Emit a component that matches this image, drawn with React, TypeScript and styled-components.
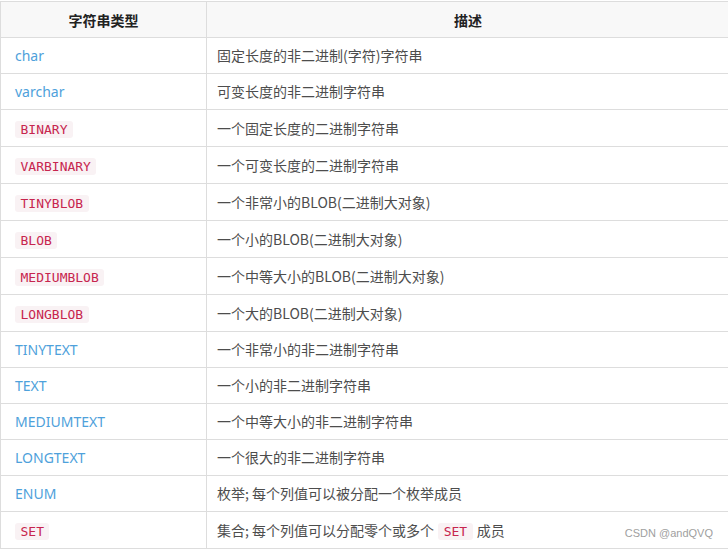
import React from "react";
import styled, { createGlobalStyle } from "styled-components";

const Global = createGlobalStyle`
  html, body { margin: 0; padding: 0; background: #fff; overflow: hidden; }
  body { font-family: "Noto Sans", "Noto Sans CJK SC", sans-serif; }
`;

const Page = styled.div`
  position: relative;
  width: 728px;
  height: 549px;
  overflow: hidden;
  padding-top: 1px;
  box-sizing: border-box;
`;

const Table = styled.table`
  width: 730px;
  border-collapse: collapse;
  table-layout: fixed;
  font-size: 14px;
  color: #4d4d4d;
`;

const HeadCell = styled.th`
  box-sizing: border-box;
  height: 36px;
  padding: 0;
  background: #f8f8f8;
  border: 1px solid #dddddd;
  color: #222;
  font-weight: bold;
  font-size: 14px;
  text-align: center;
  vertical-align: middle;
  font-family: "Noto Sans CJK SC", sans-serif;
`;

const Cell = styled.td<{ $tall?: boolean; $first?: boolean }>`
  box-sizing: border-box;
  height: ${(p) => (p.$tall ? 37 : 36)}px;
  padding: 0 0 0 ${(p) => (p.$first ? 14 : 10)}px;
  border: 1px solid #dddddd;
  vertical-align: middle;
  line-height: 22px;
  white-space: nowrap;
`;

const TypeName = styled.span`
  color: #4ea1db;
  font-family: "Noto Sans", sans-serif;
  font-size: 14px;
`;

const Code = styled.code`
  display: inline-block;
  font-family: "DejaVu Sans Mono", monospace;
  font-size: 13px;
  line-height: 17px;
  padding: 0 5.5px;
  margin: 0 1px;
  color: #c7254e;
  background: #f9f2f4;
  border-radius: 3px;
  vertical-align: middle;
`;

const FirstCode = styled(Code)`
  margin-left: 0;
`;

const Desc = styled.span`
  font-family: "Noto Sans CJK SC", sans-serif;
  font-size: 14px;
  color: #4d4d4d;
`;

const Watermark = styled.div`
  position: absolute;
  right: 15px;
  bottom: 10px;
  font-family: "Liberation Sans", sans-serif;
  font-size: 11px;
  color: #a0a0a0;
`;

type Row = { name: string; code: boolean; desc: React.ReactNode };

const rows: Row[] = [
  { name: "char", code: false, desc: "固定长度的非二进制(字符)字符串" },
  { name: "varchar", code: false, desc: "可变长度的非二进制字符串" },
  { name: "BINARY", code: true, desc: "一个固定长度的二进制字符串" },
  { name: "VARBINARY", code: true, desc: "一个可变长度的二进制字符串" },
  { name: "TINYBLOB", code: true, desc: "一个非常小的BLOB(二进制大对象)" },
  { name: "BLOB", code: true, desc: "一个小的BLOB(二进制大对象)" },
  { name: "MEDIUMBLOB", code: true, desc: "一个中等大小的BLOB(二进制大对象)" },
  { name: "LONGBLOB", code: true, desc: "一个大的BLOB(二进制大对象)" },
  { name: "TINYTEXT", code: false, desc: "一个非常小的非二进制字符串" },
  { name: "TEXT", code: false, desc: "一个小的非二进制字符串" },
  { name: "MEDIUMTEXT", code: false, desc: "一个中等大小的非二进制字符串" },
  { name: "LONGTEXT", code: false, desc: "一个很大的非二进制字符串" },
  { name: "ENUM", code: false, desc: "枚举; 每个列值可以被分配一个枚举成员" },
  {
    name: "SET",
    code: true,
    desc: (
      <>
        集合; 每个列值可以分配零个或多个 <Code>SET</Code> 成员
      </>
    ),
  },
];

export default function App() {
  return (
    <Page>
      <Global />
      <Table>
        <colgroup>
          <col style={{ width: 206 }} />
          <col />
        </colgroup>
        <thead>
          <tr>
            <HeadCell>字符串类型</HeadCell>
            <HeadCell>描述</HeadCell>
          </tr>
        </thead>
        <tbody>
          {rows.map((r) => (
            <tr key={r.name}>
              <Cell $first $tall={r.code}>
                {r.code ? <FirstCode>{r.name}</FirstCode> : <TypeName>{r.name}</TypeName>}
              </Cell>
              <Cell $tall={r.code}>
                <Desc>{r.desc}</Desc>
              </Cell>
            </tr>
          ))}
        </tbody>
      </Table>
      <Watermark>CSDN @andQVQ</Watermark>
    </Page>
  );
}
